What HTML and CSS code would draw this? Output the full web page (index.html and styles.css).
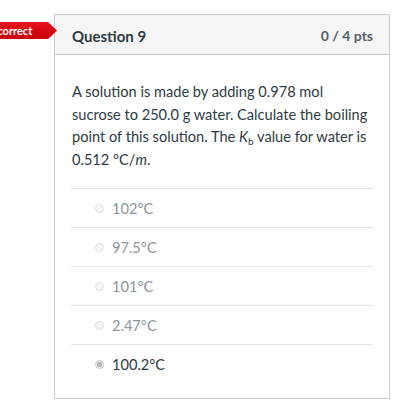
FILE: index.html
```html
<!DOCTYPE html>
<html>
<head>
<meta charset="utf-8">
<link rel="stylesheet" href="styles.css">
</head>
<body>
<div class="page">
  <div class="banner">Incorrect</div>
  <div class="card">
    <div class="header">
      <span class="title">Question 9</span>
      <span class="pts">0 / 4 pts</span>
    </div>
    <div class="body">
      <p class="question">A solution is made by adding 0.978 mol sucrose to 250.0 g water. Calculate the boiling point of this solution. The <i>K</i><sub>b</sub> value for water is 0.512 °C/<i>m</i>.</p>
      <div class="answers">
        <div class="answer"><span class="radio"></span><span class="label">102°C</span></div>
        <div class="answer"><span class="radio"></span><span class="label">97.5°C</span></div>
        <div class="answer"><span class="radio"></span><span class="label">101°C</span></div>
        <div class="answer"><span class="radio"></span><span class="label">2.47°C</span></div>
        <div class="answer selected"><span class="radio"></span><span class="label">100.2°C</span></div>
      </div>
    </div>
  </div>
</div>
</body>
</html>
```
FILE: styles.css
```css
html, body {
  margin: 0;
  padding: 0;
  background: #fff;
}
body {
  font-family: Lato, "Open Sans", sans-serif;
  color: #2d3b45;
  width: 416px;
  height: 409px;
  overflow: hidden;
}
.page {
  position: relative;
  padding: 14px 0 0 54px;
}
.banner {
  position: absolute;
  left: -12px;
  top: 22px;
  height: 17px;
  width: 69px;
  box-sizing: border-box;
  background: linear-gradient(#e8121c, #c8000a);
  color: #fff;
  font-size: 11px;
  font-weight: bold;
  line-height: 17px;
  clip-path: polygon(0 0, 60px 0, 69px 50%, 60px 100%, 0 100%);
}
.card {
  width: 336px;
  box-sizing: border-box;
  border: 1px solid #c7cdd1;
}
.header {
  height: 40px;
  box-sizing: border-box;
  background: #f5f5f5;
  border-bottom: 1px solid #c7cdd1;
  display: flex;
  align-items: center;
  justify-content: space-between;
  padding: 2px 16px 0 17px;
}
.title {
  font-size: 15px;
  font-weight: bold;
  color: #2d3b45;
}
.pts {
  font-size: 14px;
  font-weight: bold;
  color: #555f66;
}
.body {
  padding: 26px 16px 15px 16px;
}
.question {
  margin: 0 -2px 16px 1px;
  font-size: 14.6px;
  line-height: 22.7px;
}
.question sub {
  font-size: 10px;
  line-height: 0;
  vertical-align: -3px;
}
.answer {
  height: 39px;
  box-sizing: border-box;
  border-top: 1px solid #e2e5e7;
  display: flex;
  align-items: center;
  padding: 1px 0 0 24px;
  font-size: 14.6px;
  color: #8b969e;
}
.answer.selected {
  color: #2d3b45;
}
.radio {
  width: 9px;
  height: 9px;
  box-sizing: border-box;
  border-radius: 50%;
  border: 1px solid #dcdcdc;
  background: #f7f7f7;
  margin-right: 8px;
}
.answer.selected .radio {
  border-color: #c4c4c4;
  background: radial-gradient(circle, #b8b8b8 0 2.5px, #f3f3f3 3px);
}
```
